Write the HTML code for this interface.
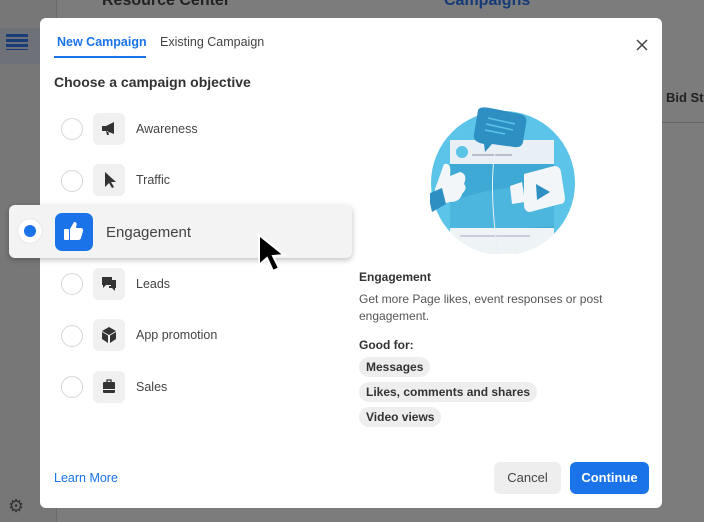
<!DOCTYPE html><html style="background:#7c7c7c"><head><style>
html,body{background:#7c7c7c !important}
body{margin:0;width:704px;height:522px;overflow:hidden;font-family:"Liberation Sans",sans-serif;position:relative}
.abs{position:absolute}
.modal{left:40px;top:18px;width:622px;height:490px;background:#fff;border-radius:6px}
.radio{width:20px;height:20px;border:1px solid #d6d6d6;border-radius:50%;background:#fff}
.ib{width:32px;height:32px;background:#f0f0f0;border-radius:6px}
.lbl{font-size:12.5px;color:#444}
.chip{background:#eee;border-radius:10px;font-size:12px;font-weight:bold;color:#333;padding:3px 7px;display:inline-block}
</style></head><body>
<svg class="abs" style="left:0;top:0" width="704" height="522"><rect width="704" height="522" fill="#7c7c7c"/><rect width="56" height="522" fill="#777"/><rect y="28" width="40" height="36" fill="#6e7178"/><rect x="662" y="122" width="42" height="1" fill="#666"/><rect x="56" y="0" width="1" height="522" fill="#6a6a6a"/></svg>
<div class="abs" style="left:6px;top:34px;width:22px;height:16px;background:repeating-linear-gradient(#1a3d7a 0 3px,transparent 3px 5px)"></div>
<div class="abs" style="left:102px;top:-8px;font-size:16px;font-weight:bold;color:#222">Resource Center</div>
<div class="abs" style="left:444px;top:-8px;font-size:16px;font-weight:bold;color:#143a78">Campaigns</div>
<div class="abs" style="left:666px;top:90px;font-size:13px;font-weight:bold;color:#222">Bid St</div>
<div class="abs" style="left:8px;top:496px;font-size:18px;color:#333">⚙</div>
<div class="abs modal">
 <div class="abs" style="left:17px;top:17px;font-size:12.5px;color:#1a73e8;font-weight:bold">New Campaign</div>
 <div class="abs" style="left:14px;top:38px;width:92px;height:2px;background:#1a73e8"></div>
 <div class="abs" style="left:120px;top:17px;font-size:12.5px;color:#444">Existing Campaign</div>
 <svg class="abs" style="left:596px;top:21px" width="12" height="12"><path d="M1 1L11 11M11 1L1 11" stroke="#444" stroke-width="1.5"/></svg>
 <div class="abs" style="left:14px;top:56px;font-size:14px;font-weight:bold;color:#333">Choose a campaign objective</div>
</div>
<div class="abs radio" style="left:61px;top:118px"></div><div class="abs ib" style="left:93px;top:113px"></div><div class="abs lbl" style="left:136px;top:122px">Awareness</div>
<svg class="abs" style="left:101px;top:121px" width="16" height="16"><path d="M1 5h4l8-4v12l-8-3H1z M5 10l1 4h2l-1-4z" fill="#333"/></svg>
<div class="abs radio" style="left:61px;top:170px"></div><div class="abs ib" style="left:93px;top:164px"></div><div class="abs lbl" style="left:136px;top:173px">Traffic</div>
<svg class="abs" style="left:103px;top:171px" width="14" height="18"><path d="M2 1v15l4-4 3 5 2-1-3-5h5z" fill="#333"/></svg>
<div class="abs radio" style="left:61px;top:273px"></div><div class="abs ib" style="left:93px;top:268px"></div><div class="abs lbl" style="left:136px;top:277px">Leads</div>
<div class="abs radio" style="left:61px;top:325px"></div><div class="abs ib" style="left:93px;top:319px"></div><div class="abs lbl" style="left:136px;top:328px">App promotion</div>
<div class="abs radio" style="left:61px;top:376px"></div><div class="abs ib" style="left:93px;top:371px"></div><div class="abs lbl" style="left:136px;top:380px">Sales</div>
<svg class="abs" style="left:101px;top:276px" width="17" height="17"><path d="M1 1h10v8H5l-3 3V9H1z M8 10h2V4h5v8h-1v3l-3-3H8z" fill="#333"/></svg>
<svg class="abs" style="left:102px;top:327px" width="14" height="16"><path d="M7 0l7 4-7 4-7-4z" fill="#333"/><path d="M0 5l6 3.5V16L0 12z M14 5l-6 3.5V16l6-4z" fill="#333"/></svg>
<svg class="abs" style="left:103px;top:379px" width="12" height="14"><path d="M4 3V1h4v2" fill="none" stroke="#333" stroke-width="1.3"/><rect x="0" y="3" width="12" height="11" rx="1" fill="#333"/><rect x="0" y="10" width="12" height="1" fill="#f0f0f0"/></svg>
<div class="abs" style="left:9px;top:205px;width:343px;height:53px;background:#f3f3f3;border-radius:6px;box-shadow:0 2px 6px rgba(0,0,0,.25)"></div>
<div class="abs" style="left:18px;top:219px;width:24px;height:24px;border-radius:50%;background:#fff;box-shadow:0 0 1px #aaa"></div>
<div class="abs" style="left:24px;top:225px;width:12px;height:12px;border-radius:50%;background:#1a73e8"></div>
<div class="abs" style="left:55px;top:213px;width:38px;height:38px;border-radius:7px;background:#1a73e8"></div>
<svg class="abs" style="left:63px;top:220px" width="22" height="22"><rect x="1" y="9" width="5" height="11" rx="1" fill="#fff"/><path d="M7 9l4-7c2 0 3 1 2.5 3L13 8h5c1.5 0 2.5 1.5 2 3l-2 7c-.5 1.5-1.5 2-3 2H7z" fill="#fff"/></svg>
<div class="abs" style="left:106px;top:224px;font-size:15px;color:#444">Engagement</div>
<svg class="abs" style="left:255px;top:233px" width="40" height="42"><path d="M4 2 L4 32 L12 25 L18 38 L24 35 L18 23 L29 22 Z" fill="#000" stroke="#fff" stroke-width="2"/></svg>
<svg class="abs" style="left:430px;top:104px" width="150" height="150">
<defs><clipPath id="c"><circle cx="73" cy="79" r="72"/></clipPath></defs>
<circle cx="73" cy="79" r="72" fill="#5bc4e8"/>
<g clip-path="url(#c)">
<rect x="20" y="36" width="104" height="130" fill="#e8f0f5"/>
<rect x="20" y="60" width="104" height="66" fill="#3ea9d4"/>
<path d="M0 110 Q60 70 160 90 L160 120 L0 130Z" fill="#5bc4e8" opacity=".5"/>
<rect x="20" y="124" width="104" height="30" fill="#eef3f6"/>
<rect x="30" y="131" width="70" height="2" fill="#ccd"/>
</g>
<circle cx="32" cy="48" r="6" fill="#5bc4e8"/>
<rect x="42" y="50" width="40" height="2" fill="#bbc"/>
<path d="M48 6 Q50 2 60 4 L90 10 Q98 12 96 20 L93 38 Q92 44 84 43 L62 40 L55 48 L54 40 Q42 38 44 30Z" fill="#2e8fc2"/>
<path d="M58 14L85 20M56 20L83 26M55 26L75 30" stroke="#5bc4e8" stroke-width="1.5"/>
<path d="M66 44 Q58 80 68 150" stroke="#e8f0f5" fill="none" stroke-width="1"/>
<path d="M14 60 Q22 58 20 72 L30 68 Q38 70 34 80 Q38 84 32 90 Q30 98 20 98 L12 100 Q4 95 5 85Z" fill="#f3f6f8"/>
<path d="M-2 90 L12 84 L16 100 L2 108Z" fill="#2e8fc2"/>
<path d="M80 82 L92 78 L95 98 L82 100Z" fill="#f3f6f8"/>
<path d="M94 70 L124 62 Q130 62 131 68 L135 94 Q135 100 130 100 L100 108 Q95 108 94 102Z" fill="#f3f6f8"/>
<path d="M106 80 L120 88 L107 96 Z" fill="#2e8fc2"/>
</svg>
<div class="abs" style="left:359px;top:270px;font-size:12px;font-weight:bold;color:#333">Engagement</div>
<div class="abs" style="left:359px;top:291px;font-size:12px;color:#555;line-height:17px;width:270px">Get more Page likes, event responses or post engagement.</div>
<div class="abs" style="left:359px;top:338px;font-size:12px;font-weight:bold;color:#333">Good for:</div>
<div class="abs chip" style="left:359px;top:357px">Messages</div>
<div class="abs chip" style="left:359px;top:382px">Likes, comments and shares</div>
<div class="abs chip" style="left:359px;top:407px">Video views</div>
<div class="abs" style="left:54px;top:471px;font-size:12.5px;color:#1a73e8">Learn More</div>
<div class="abs" style="left:494px;top:462px;width:67px;height:32px;background:#eee;border-radius:6px;font-size:13px;color:#444;text-align:center;line-height:32px">Cancel</div>
<div class="abs" style="left:570px;top:462px;width:79px;height:32px;background:#1a73e8;border-radius:6px;font-size:13px;font-weight:bold;color:#fff;text-align:center;line-height:32px">Continue</div>
</body></html>
